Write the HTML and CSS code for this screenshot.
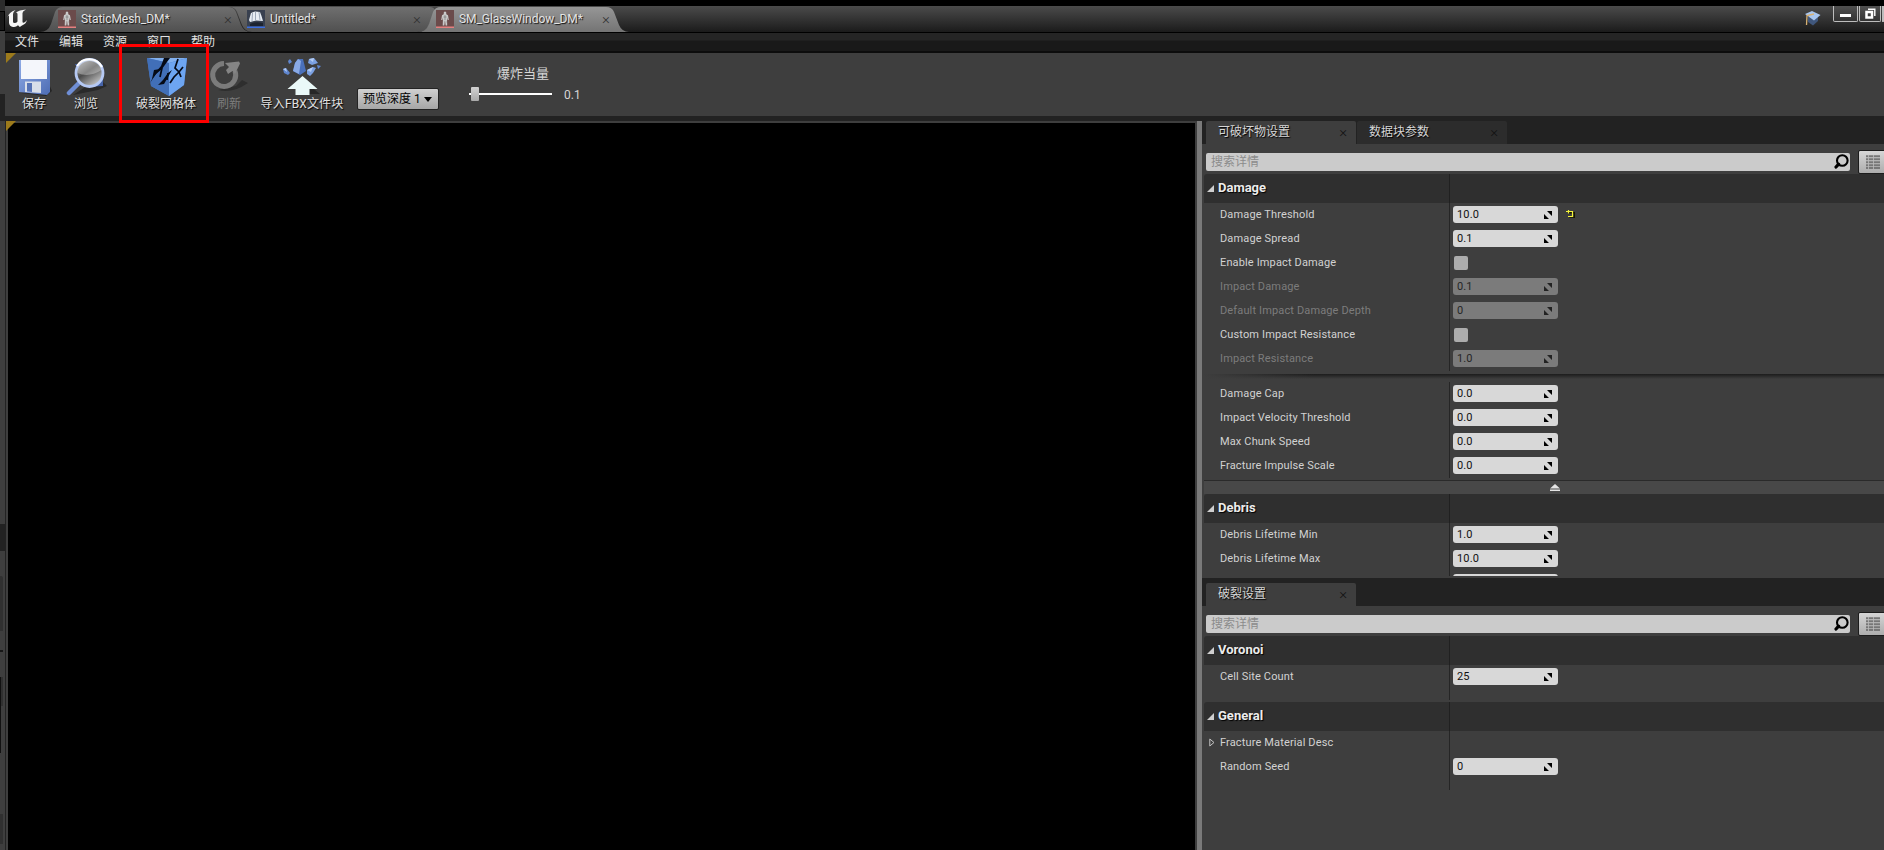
FILE: index.html
```html
<!DOCTYPE html>
<html lang="zh-CN">
<head>
<meta charset="utf-8">
<title>SM_GlassWindow_DM</title>
<link rel="stylesheet" href="styles.css">
</head>
<body>
<svg width="0" height="0" class="defs">
  <defs>
    <linearGradient id="tabIdle" x1="0" y1="0" x2="0" y2="1"><stop offset="0" stop-color="#6f6f6f"/><stop offset="1" stop-color="#505050"/></linearGradient>
    <linearGradient id="tabOn" x1="0" y1="0" x2="0" y2="1"><stop offset="0" stop-color="#969696"/><stop offset="1" stop-color="#747474"/></linearGradient>
    <linearGradient id="blue" x1="0" y1="0" x2="1" y2="1"><stop offset="0" stop-color="#8fabe6"/><stop offset="1" stop-color="#4d6cb4"/></linearGradient>
    <linearGradient id="lens" x1="0" y1="0" x2=".7" y2="1"><stop offset="0" stop-color="#b9b9b9"/><stop offset=".5" stop-color="#4b4b4b"/><stop offset="1" stop-color="#c8c8c8"/></linearGradient>
    <symbol id="mesh" viewBox="0 0 18 18"><rect width="18" height="18" fill="#6b4b4b"/><rect y="16.5" width="18" height="1.5" fill="#e58080"/><path d="M7.8 2.2Q9 1 10.200 2.200L10.300 4.200L12 5.300L12.800 10H11.700L11 7.500L11.200 15.500H9.600L9 10.500L8.300 15.500H6.700L7 7.500L6.300 10H5.200L6 5.300L7.700 4.200Z" fill="#c9c9c9"/><path d="M9 5v5M7.500 7h3M8 12h.5M10 12h.5" stroke="#777" stroke-width=".7"/></symbol>
    <symbol id="spin" viewBox="0 0 8 8"><path d="M3 0H8V5ZM0 3V8H5Z"/></symbol>
    <symbol id="find" viewBox="0 0 15 15"><circle cx="8.300" cy="6.500" r="5.300" fill="none" stroke="#000" stroke-width="2.100"/><path d="M4.600 10.200L2 13" stroke="#000" stroke-width="3.200" stroke-linecap="round"/></symbol>
    <symbol id="grid" viewBox="0 0 14 14"><path d="M0 1.200h14M0 4.200h14M0 7.200h14M0 10.200h14M0 13h14" stroke="#777" stroke-width="1.900"/><path d="M2.500 0v14M7.500 0v14" stroke="#bbb" stroke-width=".8"/></symbol>
    <symbol id="open" viewBox="0 0 7 7"><path d="M7 0V7H0Z" fill="#cfcfcf"/></symbol>
  </defs>
</svg>
<div class="screen">
  <div class="strip"><i class="s1"></i><i class="s2"></i><i class="s3"></i><i class="s4"></i><i class="s5"></i><i class="s6"></i><i class="s7"></i><i class="s8"></i><i class="s9"></i><i class="s10"></i><i class="s11"></i><i class="s12"></i><i class="s13"></i></div>
  <div class="window">
    <header class="title">
      <svg class="logo" width="23" height="19" viewBox="0 0 23 19"><path d="M1 9Q3 3 9.500 1Q7 3 7 5V12.500Q7 14 8.500 14Q10.500 14 11.500 12.500V5Q11.500 3.500 10 3.500Q13 1 20 .4Q16.500 2 16.500 4V12.500Q16.500 14 17.500 13.800Q19 13.500 21 11Q20 15 16 16.500L13.800 18L12 16.300Q10 18.500 7 18Q3.500 17.500 3 14V7Q3 5.500 1 9Z" fill="#f5f5f5"/></svg>
      <nav class="tabs">
        <div class="tab"><svg class="shape" width="211" height="25"><path d="M0 25Q8 25 11 17L15 5Q17 0 23 0H188Q194 0 196 5L201 18Q204 25 211 25Z" fill="url(#tabIdle)"/></svg><svg width="18" height="18"><use href="#mesh"/></svg><span>StaticMesh_DM*</span><b class="x">×</b></div>
        <div class="tab"><svg class="shape" width="211" height="25"><path d="M0 0Q6 0 8 5L13 18Q16 25 23 25H188Q198 25 200 18L205 5Q207 0 200 0Z" fill="url(#tabIdle)"/></svg><svg width="18" height="18" viewBox="0 0 18 18"><rect width="18" height="18" fill="#38404f"/><rect y="16.500" width="18" height="1.500" fill="#3c6fe0"/><path d="M2 10L4 3L6.500 2L8 1.500L13 2L14.500 6L16 11L9 10.500L3 12Z" fill="#e8eef5"/><path d="M5.500 3L5 11M8.500 2V10M12 2L13 10" stroke="#8794a8" stroke-width=".8" fill="none"/><path d="M3 14Q9 11 16 13V16H3Z" fill="#1d2430"/></svg><span>Untitled*</span><b class="x">×</b></div>
        <div class="tab on"><svg class="shape" width="211" height="25"><path d="M0 25Q8 25 11 17L15 5Q17 0 23 0H188Q194 0 196 5L201 18Q204 25 211 25Z" fill="url(#tabOn)"/></svg><svg width="18" height="18"><use href="#mesh"/></svg><span>SM_GlassWindow_DM*</span><b class="x">×</b></div>
      </nav>
      <svg class="hat" width="16" height="15" viewBox="0 0 16 15"><path d="M3 6V11L8 14.500L13 10V5Z" fill="#40577c"/><path d="M0 3L7 0L15.500 4L9 9.500Z" fill="#a8c6ef"/><path d="M9 3L2 4.500L1.500 14" stroke="#d8b173" stroke-width="1.300" fill="none"/></svg>
      <div class="winbtns"><i class="wb wide"><svg width="11" height="3"><rect width="11" height="3" fill="#fff"/></svg></i><i class="wb"><svg width="11" height="11" viewBox="0 0 11 11"><path d="M3 1.200H9.800V8" stroke="#fff" stroke-width="1.400" fill="none"/><rect x="1.500" y="4" width="5.500" height="5.500" stroke="#fff" stroke-width="2.500" fill="none"/></svg></i><i class="wb cut"></i></div>
    </header>
    <nav class="menu"><span>文件</span><span>编辑</span><span>资源</span><span>窗口</span><span>帮助</span></nav>
    <div class="toolbar">
      <i class="corner"></i>
      <div class="tool save"><svg width="36" height="38" viewBox="0 0 36 38"><path d="M5 35L30 38L36 33L33 26Z" fill="#252525"/><path d="M3 2H34V34L31 37L3 34Z" fill="url(#blue)"/><path d="M5 2H31V21H5Z" fill="#f4f6fb"/><path d="M9 23.500H25V35L9 34Z" fill="#d8dee9"/><path d="M11 25H16V34L11 33.500Z" fill="#5572b6"/></svg><span>保存</span></div>
      <div class="tool browse"><svg width="42" height="38" viewBox="0 0 42 38"><path d="M8 37L33 32L42 28L34 20Z" fill="#292929"/><path d="M14 25L4 35" stroke="#6f8ed5" stroke-width="4.500" stroke-linecap="round"/><path d="M10 6L38 7V28L22 29Z" fill="#4663a8"/><circle cx="24.500" cy="15" r="13.500" fill="url(#lens)" stroke="#b5c8f3" stroke-width="2.800"/><path d="M12.500 15A12 12 0 0 1 36.500 12Q24 20 12.500 15Z" fill="#ddd" opacity=".4"/><path d="M12 8A14.500 14.500 0 0 1 37 9" stroke="#fff" stroke-width="2" fill="none"/></svg><span>浏览</span></div>
      <div class="tool fracture"><svg width="42" height="38" viewBox="0 0 42 38"><path d="M1 0L13 1L41 0L38 27L23 38L5 28Z" fill="#4778c2"/><path d="M1 0H41L23 5Z" fill="#82b0ee"/><path d="M23 5L41 0L38 27L23 38Z" fill="#6da5f1"/><path d="M1 0L23 5V38L5 28Z" fill="#416fb8"/><path d="M18 0L15 8L9 15L4 25L10 16L16 11L21 4L24 0Z" fill="#050a16"/><path d="M8 12L14 11L6 21ZM22 15L26 12L18 26L12 27L17 22Z" fill="#050a16"/><path d="M32 1L29 10L33 14L35 19M33 14L28 19L24 25M37 9L33 14M16 10L14 19M22 15L21 22" stroke="#050a16" stroke-width="1.700" fill="none"/></svg><span>破裂网格体</span></div>
      <div class="tool refresh"><svg width="40" height="38" viewBox="0 0 40 38"><path d="M10 32Q24 36 40 25L34 22L28 28Z" fill="#2e2e2e"/><path d="M16 5.500A11.500 11.500 0 1 0 27 13" stroke="#7b7b7b" stroke-width="5" fill="none"/><path d="M17 5L31 3.500L32 5.500L27 16L24.500 13L20 16L18 12L21 9Z" fill="#858585"/></svg><span>刷新</span></div>
      <div class="tool import"><svg width="40" height="38" viewBox="0 0 40 38"><path d="M25 36H38L27 27Z" fill="#272727"/><path d="M13 5L16 1H21L24 13L18 17L11 13Z" fill="#4a70ba"/><path d="M13 5L16 1L19 3L17 16L11 13Z" fill="#89a9e5"/><path d="M27 1L32 0L36 5L30 7L26 5ZM25 12L31 9L34 10L31 15L28 18L25 16Z" fill="#7ba0e1"/><path d="M1 11L4 10L8 15L6 17L2 15ZM6 3L8 1L10 4L7 6ZM35 7L39 8L36 11Z" fill="#5f86cf"/><path d="M27 1L32 0L31 4ZM25 12L31 9L29 14ZM1 11L4 10L5 14Z" fill="#b3ccf5"/><path d="M20.500 18L35.500 31H27.500V37H13.500V31H5.500Z" fill="#eaf9f8"/></svg><span>导入FBX文件块</span></div>
      <button class="depth">预览深度 1<i></i></button>
      <div class="blast"><label>爆炸当量</label><div class="slider"><i></i></div></div>
      <span class="amount">0.1</span>
      <div class="mark"></div>
    </div>
    <main class="body">
      <section class="viewport"><i class="corner"></i></section>
      <i class="splitter"></i>
      <aside class="side">
        <section class="panel upper">
          <div class="ptabs"><div class="ptab on">可破坏物设置<b>×</b></div><div class="ptab">数据块参数<b>×</b></div></div>
          <div class="find"><div class="field"><span>搜索详情</span><svg width="15" height="15"><use href="#find"/></svg></div><div class="view"><svg width="14" height="14"><use href="#grid"/></svg></div></div>
          <div class="cat"><svg width="7" height="7"><use href="#open"/></svg>Damage</div>
          <div class="rows">
            <div class="row"><label>Damage Threshold</label><div class="num">10.0<svg width="8" height="8"><use href="#spin"/></svg></div><svg class="reset" width="9" height="8" viewBox="0 0 9 8"><path d="M1 2H7.500V7.200H2.500" stroke="#161600" stroke-width="1.400" fill="none" transform="translate(.8 .7)"/><path d="M0 1.500H6.500V6.500H2M2.500 0V3.500" stroke="#f3f33b" stroke-width="1.200" fill="none"/></svg></div>
            <div class="row"><label>Damage Spread</label><div class="num">0.1<svg width="8" height="8"><use href="#spin"/></svg></div></div>
            <div class="row"><label>Enable Impact Damage</label><i class="check"></i></div>
            <div class="row off"><label>Impact Damage</label><div class="num">0.1<svg width="8" height="8"><use href="#spin"/></svg></div></div>
            <div class="row off"><label>Default Impact Damage Depth</label><div class="num">0<svg width="8" height="8"><use href="#spin"/></svg></div></div>
            <div class="row"><label>Custom Impact Resistance</label><i class="check"></i></div>
            <div class="row off"><label>Impact Resistance</label><div class="num">1.0<svg width="8" height="8"><use href="#spin"/></svg></div></div>
          </div>
          <div class="fold"></div>
          <div class="rows">
            <div class="row"><label>Damage Cap</label><div class="num">0.0<svg width="8" height="8"><use href="#spin"/></svg></div></div>
            <div class="row"><label>Impact Velocity Threshold</label><div class="num">0.0<svg width="8" height="8"><use href="#spin"/></svg></div></div>
            <div class="row"><label>Max Chunk Speed</label><div class="num">0.0<svg width="8" height="8"><use href="#spin"/></svg></div></div>
            <div class="row"><label>Fracture Impulse Scale</label><div class="num">0.0<svg width="8" height="8"><use href="#spin"/></svg></div></div>
          </div>
          <div class="collapse"><svg width="10" height="7" viewBox="0 0 10 7"><path d="M5 0L10 4.500H0ZM0 5.600H10V7H0Z" fill="#e4e4e4"/></svg></div>
          <div class="cat"><svg width="7" height="7"><use href="#open"/></svg>Debris</div>
          <div class="rows clip">
            <div class="row"><label>Debris Lifetime Min</label><div class="num">1.0<svg width="8" height="8"><use href="#spin"/></svg></div></div>
            <div class="row"><label>Debris Lifetime Max</label><div class="num">10.0<svg width="8" height="8"><use href="#spin"/></svg></div></div>
            <div class="row"><label></label><div class="num"></div></div>
          </div>
        </section>
        <section class="panel lower">
          <div class="ptabs"><div class="ptab on">破裂设置<b>×</b></div></div>
          <div class="find"><div class="field"><span>搜索详情</span><svg width="15" height="15"><use href="#find"/></svg></div><div class="view"><svg width="14" height="14"><use href="#grid"/></svg></div></div>
          <div class="cat"><svg width="7" height="7"><use href="#open"/></svg>Voronoi</div>
          <div class="rows voronoi">
            <div class="row"><label>Cell Site Count</label><div class="num">25<svg width="8" height="8"><use href="#spin"/></svg></div></div>
          </div>
          <div class="cat"><svg width="7" height="7"><use href="#open"/></svg>General</div>
          <div class="rows general">
            <div class="row"><svg class="closed" width="6" height="9" viewBox="0 0 6 9"><path d="M.8 1V8L5 4.500Z" fill="none" stroke="#c4c4c4"/></svg><label>Fracture Material Desc</label></div>
            <div class="row"><label>Random Seed</label><div class="num">0<svg width="8" height="8"><use href="#spin"/></svg></div></div>
          </div>
        </section>
      </aside>
    </main>
  </div>
</div>
</body>
</html>
```
FILE: styles.css
```css
* { box-sizing: border-box; }
body { margin: 0; background: #000; overflow: hidden; font-family: Roboto, "Noto Sans CJK SC", sans-serif; color: #d6d6d6; }
svg { display: block; flex: none; }
.defs { position: absolute; }
.screen { display: flex; width: 1884px; height: 850px; overflow: hidden; }

/* edge of the window underneath */
.strip { width: 5px; flex: none; display: flex; flex-direction: column; background: #3e3e3e; }
.strip i { flex: none; width: 5px; }
.s1 { height: 11px; background: #2c2c2c; }
.s2 { height: 20px; background: #191919; border: 1px solid #000; border-left: 0; }
.s3 { height: 63px; }
.s4 { height: 27px; background: #222; }
.s5 { height: 403px; }
.s6 { height: 27px; background: #222; }
.s7 { height: 25px; }
.strip .s8 { height: 55px; width: 3px; background: #303030; border-radius: 0 2px 0 0; }
.s9 { height: 19px; }
.strip .s10 { height: 2px; width: 3px; background: #161616; }
.s11 { height: 25px; }
.strip .s12 { height: 76px; width: 3px; background: linear-gradient(#303030 0 29px, #3e3e3e 29px); border-left: 1px solid #111; }
.strip .s13 { height: 30px; width: 3px; margin-top: 61px; background: #303030; }

.window { flex: 1; min-width: 0; display: flex; flex-direction: column; padding-top: 6px; }
.title { height: 27px; flex: none; display: flex; border-bottom: 1px solid #000; background: linear-gradient(#4b4b4b, #1b1b1b); position: relative; }
.logo { margin: 3px 0 0 1px; }
.tabs { display: flex; margin: 1px 0 0 11px; height: 25px; }
.tab { position: relative; width: 211px; margin-right: -22px; padding-left: 18px; display: flex; align-items: center; padding-bottom: 2px; font-size: 12px; color: #e4e4e4; text-shadow: 1px 1px 1px #111; }
.tab.on { z-index: 1; }
.tab > * { position: relative; }
.tab .shape { position: absolute; left: 0; top: 0; }
.tab span { margin-left: 5px; width: 143px; letter-spacing: -.05px; }
.x { font: 300 15px/14px Roboto; color: #303030; text-shadow: none; }
.hat { margin: 5px 0 0 auto; }
.winbtns { display: flex; gap: 1px; margin-left: 12px; overflow: hidden; }
.wb { width: 22px; height: 16px; border: 1px solid #bdbdbd; border-top: 0; border-radius: 0 0 2px 2px; background: linear-gradient(#505050, #333); display: flex; align-items: center; justify-content: center; }
.wb.wide { width: 25px; padding-top: 3px; }
.wb.cut { width: 2px; }

.menu { height: 20px; flex: none; display: flex; gap: 20px; padding-left: 10px; font-size: 12px; line-height: 18px; color: #e2e2e2; background: linear-gradient(#252525 0 7px, #191919 8px); border-bottom: 2px solid #0c0c0c; }
.menu span { width: 24px; }

.toolbar { position: relative; height: 63px; flex: none; display: flex; padding-left: 3px; background: #3e3e3e; }
.corner { position: absolute; left: 0; top: 0; width: 10px; height: 10px; background: #9c7a1b; clip-path: polygon(0 0, 100% 0, 0 100%); }
.toolbar .corner { left: 1px; }
.tool { display: flex; flex-direction: column; align-items: center; padding-top: 5px; font-size: 12px; line-height: 16px; color: #e2e2e2; text-shadow: 1px 1px 1px #000; white-space: nowrap; }
.save, .browse { width: 52px; }
.fracture { width: 84px; margin-left: 12px; }
.fracture svg { margin-left: 2px; }
.refresh { width: 42px; color: #7d7d7d; text-shadow: none; }
.refresh svg { margin-right: 2px; }
.import { width: 94px; margin-left: 5px; letter-spacing: .15px; }
.depth { margin: 35px 0 0 8px; width: 82px; height: 22px; padding: 0 0 0 5px; border: 1px solid #242424; outline: 0; border-radius: 2px; background: linear-gradient(#d0d0d0, #a6a6a6); font: 12px/18px Roboto, "Noto Sans CJK SC", sans-serif; color: #000; display: flex; align-items: center; white-space: nowrap; }
.depth i { margin-left: 3px; border: 4.500px solid transparent; border-top: 5px solid #000; border-bottom: 0; }
.blast { margin: 12px 0 0 30px; width: 83px; }
.blast label { display: block; margin-left: 13px; text-align: center; padding-left: 12px; font-size: 13px; line-height: 18px; white-space: nowrap; }
.slider { margin-top: 4px; height: 14px; display: flex; padding-left: 2px; background: linear-gradient(#fff, #fff) 0 6px / 100% 2px no-repeat; }
.slider i { width: 8px; height: 14px; border-radius: 1px; background: linear-gradient(#d2d2d2, #a9a9a9); }
.amount { margin: 34px 0 0 12px; font-size: 12px; line-height: 16px; }
.mark { position: absolute; z-index: 5; left: 114px; top: -9px; width: 90px; height: 79px; border: 3px solid #f00; }

.body { flex: 1; min-height: 0; display: flex; border-left: 1px solid #222; background: #3e3e3e; border-top: 5px solid #222; }
.viewport { position: relative; width: 1191px; flex: none; border: 2px solid #3e3e3e; border-bottom: 0; background: #000; }
.viewport .corner { left: -2px; top: -2px; }
.splitter { width: 5px; flex: none; background: #7a7a7a; }
.side { flex: 1; min-width: 0; display: flex; flex-direction: column; }
.panel { overflow: hidden; }
.upper { height: 457px; flex: none; }
.lower { flex: 1; border-top: 5px solid #222; }
.ptabs { height: 23px; display: flex; gap: 1px; padding-left: 4px; background: #222; }
.ptab { width: 150px; height: 23px; padding: 0 9px 0 12px; display: flex; align-items: center; justify-content: space-between; font-size: 12px; line-height: 20px; padding-bottom: 1px; background: #2c2c2c; border-radius: 2px 2px 0 0; text-shadow: 1px 1px 1px #000; }
.ptab.on { background: #3e3e3e; }
.ptab b { font: 300 15px/14px Roboto; color: #111; text-shadow: none; }
.find { height: 30px; padding: 6px 0 0 4px; display: flex; gap: 8px; }
.field { margin-top: 3px; width: 644px; height: 18px; flex: none; border-radius: 2px; background: #cbcbcb; color: #8b8b8b; font-size: 12px; line-height: 18px; padding: 0 1px 0 5px; display: flex; justify-content: space-between; }
.field svg { margin-top: 1px; }
.view { width: 40px; height: 24px; flex: none; border: 1px solid #1c1c1c; border-radius: 2px; background: linear-gradient(#d6d6d6, #adadad); padding: 4px 0 0 7px; }
.cat { height: 29px; margin-left: 2px; padding: 0 0 2px 3px; display: flex; align-items: center; gap: 4px; font-size: 13px; font-weight: 700; color: #ececec; text-shadow: 1px 1px 1px #000; border-top-left-radius: 3px; background: linear-gradient(#202020, #202020) 245px 0 / 1px 100% no-repeat #2f2f2f; }
.cat svg { margin-top: 2px; }
.rows { margin-left: 2px; background: linear-gradient(#252525, #252525) 245px 0 / 1px 100% no-repeat; }
.row { height: 24px; display: flex; align-items: center; position: relative; font-size: 11px; letter-spacing: .14px; color: #d2d2d2; }
.row label { width: 233px; margin-left: 16px; flex: none; padding-bottom: 1px; white-space: nowrap; }
.num { width: 105px; height: 17px; margin-bottom: 1px; border-radius: 3px; background: #d8d8d8; color: #111; line-height: 17px; padding: 0 6px 0 4px; display: flex; justify-content: space-between; }
.num svg { margin-top: 5px; }
.off { color: #7c7c7c; }
.off .num { background: #7b7b7b; color: #262626; }
.off .num svg { fill: #222; }
.check { width: 14px; height: 14px; margin: 0 0 0 1px; border-radius: 2px; background: #acacac; }
.reset { margin: 0 0 2px 8px; }
.fold { height: 11px; margin-left: 2px; background: linear-gradient(90deg, #3e3e3e, #3e3e3e00 110px), linear-gradient(#1c1c1c, #3e3e3e) 0 3px / 100% 5px no-repeat; }
.collapse { height: 16px; margin-left: 2px; background: linear-gradient(#3e3e3e 0 2px, #2a2a2a 2px 3px, #484848 3px); padding: 6px 0 0 346px; }
.clip { height: 53px; overflow: hidden; }
.voronoi { height: 35px; margin-bottom: 2px; }
.general { height: 59px; }
.closed { position: absolute; left: 5px; top: 7px; }
```
